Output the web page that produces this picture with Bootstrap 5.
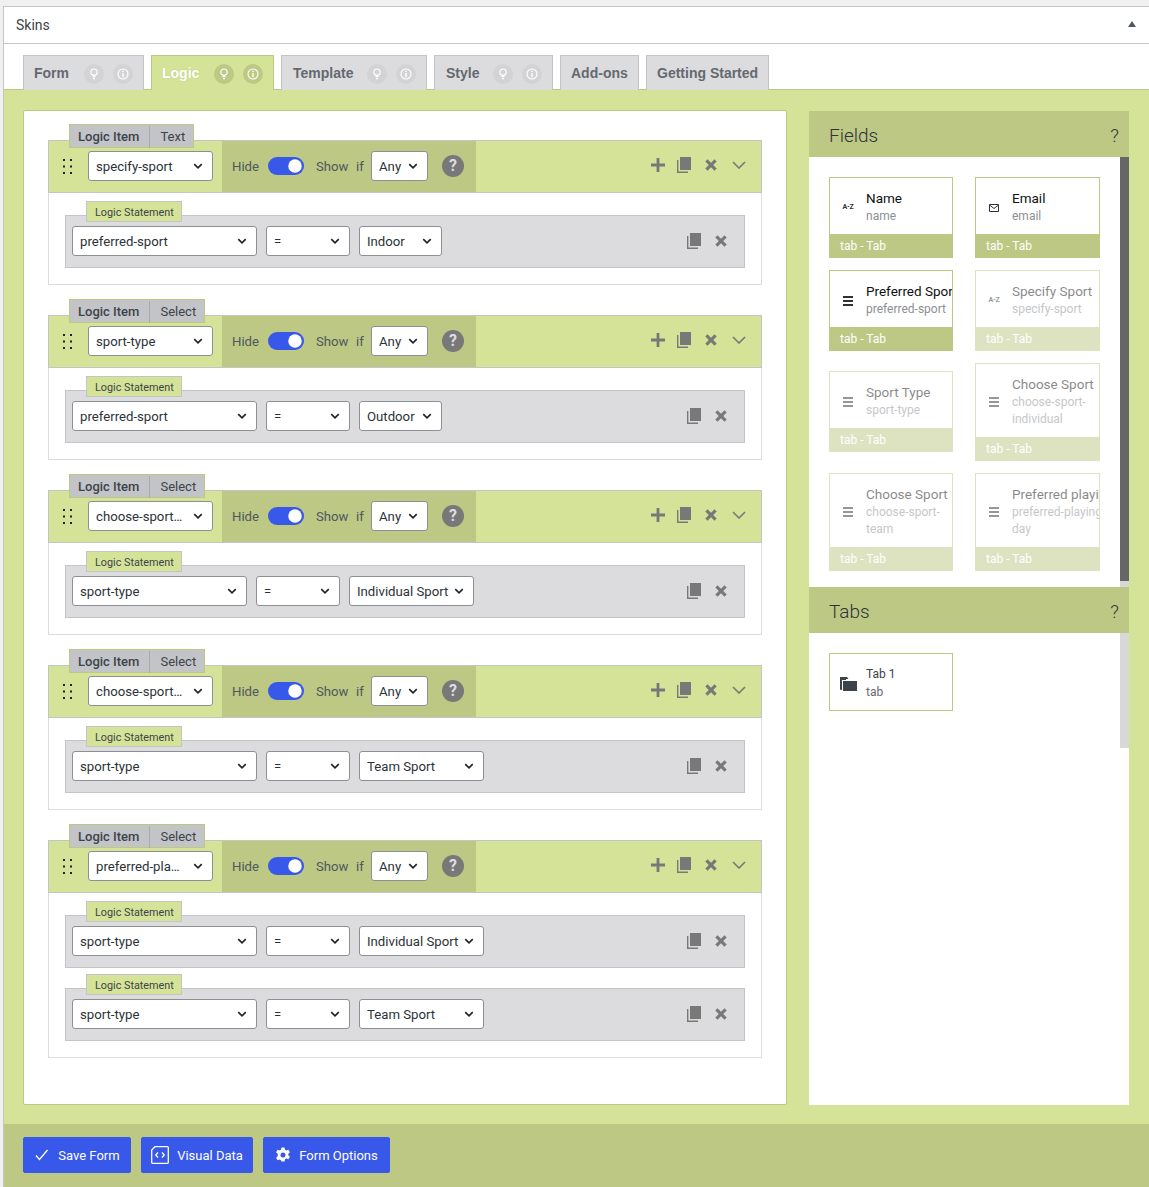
<!DOCTYPE html>
<html lang="en">
<head>
  <meta charset="UTF-8">
  <title>Skins</title>
  <link href="https://cdn.jsdelivr.net/npm/bootstrap@5.3.0/dist/css/bootstrap.min.css" rel="stylesheet">
  <style>
    body { background: #f0f0f1; font-family: Roboto, "Noto Sans", sans-serif; font-size: 13.2px; color: #3c434a; padding: 6px 0 0 3px; height: 1187px; overflow: hidden; }
    .panel-wrap { border-top: 1px solid #c3c4c7; border-left: 1px solid #c3c4c7; background: #fff; height: 1181px; display: flex; flex-direction: column; }
    .skins-head { height: 37px; border-bottom: 1px solid #c3c4c7; padding: 1px 12px 0; font-size: 14px; }
    .skins-arrow { width: 0; height: 0; border-left: 4px solid transparent; border-right: 4px solid transparent; border-bottom: 6px solid #50575e; margin-right: 1px; margin-top: -3px; }
    .tab-strip { height: 46px; padding: 11px 0 0 19px; gap: 7px; border-bottom: 1px solid #bdc885; }
    .tab-item { height: 36px; border: 1px solid #c3c4c7; border-bottom: 0; background: #dcdcde; padding: 0 10px; font-family: "Liberation Sans", sans-serif; font-weight: 700; font-size: 14px; color: #646970; white-space: nowrap; }
    .tab-item.tab-wide { padding-left: 11px; }
    .tab-item.is-on { background: #d5e398; border-color: #bdc885; color: #fff; text-shadow: 0 0 2px #bdc885; height: 36px; margin-bottom: -1px; }
    .tab-dot { width: 20px; height: 20px; border-radius: 50%; background: #d3d3d5; }
    .tab-dot svg { width: 12px; height: 12px; display: block; margin: 4px; }
    .is-on .tab-dot { background: #bdc885; }
    .tab-gap { margin-left: 15px; gap: 9px; }
    .work-area { height: 1034px; background: #d5e398; padding: 20px 19px 19px 19px; gap: 22px; }
    .logic-col { width: 764px; background: #fff; border: 1px solid #bdc885; border-radius: 2px; padding: 29px 24px 0; }
    .logic-box { position: relative; border: 1px solid #dcdcde; margin-bottom: 30px; padding-bottom: 16px; }
    .logic-top { margin: -1px -1px 0; height: 53px; border: 1px solid #c3c4c7; background: #d5e398; }
    .logic-tag { position: absolute; left: 20px; top: -17px; height: 24px; border: 1px solid #bdc885; background: #c3c4c7; font-size: 13px; line-height: 24px; padding: 0 8px; z-index: 1; }
    .logic-tag b { font-weight: 500; padding-right: 10px; margin-right: 10px; border-right: 1px solid #aaa; line-height: 22px; display: inline-block; }
    .drag-cell { width: 173px; padding: 0 0 1px 14px; gap: 16px; flex: none; height: 100%; }
    .drag-dots { width: 9px; height: 15px; flex: none; }
    .rule-cell { width: 254px; background: #bdc885; padding: 0 0 1px 10px; height: 100%; flex: none; color: #50575e; }
    .tool-cell { padding: 0 15px 3px 0; gap: 12px; }
    .tool-gap { margin-left: 2px; }
    .tool-gap-b { margin-left: 3px; }
    .tool-icon { color: #787878; display: block; }
    select.form-select { height: 30px; border: 1px solid #8c8f94; border-radius: 3px; font-size: 13.2px; line-height: 18px; color: #2c3338; padding: 2px 20px 0 7px; background-image: url("data:image/svg+xml,%3csvg xmlns='http://www.w3.org/2000/svg' viewBox='0 0 16 16'%3e%3cpath fill='none' stroke='%231d2327' stroke-width='2.6' d='M2 5l6 6 6-6'/%3e%3c/svg%3e"); background-position: right 9px center; background-size: 10px 10px; text-overflow: ellipsis; box-shadow: none; }
    select.w-top { width: 125px; padding-right: 28px; }
    .w-any { width: 57px; margin-left: 0; }
    .w-f1 { width: 185px; } .w-f2 { width: 175px; } .w-op { width: 84px; } .w-v1 { width: 83px; } .w-v2 { width: 125px; }
    .hide-lbl { width: 36px; flex: none; padding-top: 2px; }
    .show-lbl { margin-left: 12px; width: 40px; flex: none; padding-top: 2px; }
    .if-lbl { width: 15px; flex: none; padding-top: 2px; }
    .form-switch { padding: 0; margin: 0; min-height: 0; line-height: 0; }
    .form-switch .form-check-input { margin: 0; width: 36px; height: 18px; float: none; border: 0; background-color: #3858e9; }
    .help-dot { width: 22px; height: 22px; border-radius: 50%; background: #787878; color: #dcdcde; font-weight: 700; font-size: 16px; margin-left: 14px; }
    .stmt-box { position: relative; margin: 22px 16px 0; height: 53px; background: #dcdcde; border: 1px solid #c3c4c7; padding: 0 17px 1px 6px; gap: 9px; }
    .stmt-tag { position: absolute; left: 20px; top: -15px; width: 96px; height: 21px; background: #d5e398; border: 1px solid #c3c4c7; font-size: 10.8px; padding: 0 8px; line-height: 22px; color: #3c434a; white-space: nowrap; }
    .stmt-tools { gap: 14px; }
    .side-col { width: 320px; margin-top: 1px; position: relative; background: #fff; }
    .side-head { height: 46px; background: #bdc885; font-size: 19px; padding: 5px 10px 0 20px; position: relative; z-index: 2; color: #2c3338; font-weight: 300; }
    .field-list { height: 430px; padding: 20px 20px 0; display: grid; grid-template-columns: 124px 125px; column-gap: 22px; row-gap: 12px; align-items: center; align-content: start; }
    .tab-list { padding: 20px; }
    .field-card { border: 1px solid #bdc885; overflow: hidden; background: #fff; }
    .field-card.is-dim { opacity: .5; }
    .field-card.nudge-up { margin-bottom: 1px; }
    .field-main { display: flex; align-items: center; padding: 11px 0 9px; }
    .field-ico { width: 36px; flex: none; text-align: center; color: #2c3338; }
    .az-mark { font-size: 7px; font-weight: 700; letter-spacing: -.2px; }
    .field-name { font-size: 13.5px; line-height: 19px; color: #111; white-space: nowrap; }
    .field-name.is-small { color: #3c434a; font-size: 12px; }
    .field-slug { font-size: 12px; line-height: 17px; color: #8c8f94; white-space: nowrap; }
    .field-slug.is-small { color: #646970; }
    .field-foot { margin: 0 -1px -1px; height: 24px; line-height: 24px; background: #bdc885; color: #fff; font-size: 12px; padding-left: 11px; }
    .scroll-track { position: absolute; right: 0; top: 46px; width: 9px; height: 591px; background: #d8d8d8; }
    .scroll-thumb { height: 424px; background: #666; }
    .foot-bar { height: 63px; background: #bdc885; padding: 13px 19px; gap: 10px; }
    .btn-blue { height: 36px; background: #3858e9; border-color: #3858e9; color: #fff; font-size: 13px; border-radius: 2px; padding: 0; gap: 8px; display: flex; align-items: center; justify-content: center; }
    .btn-blue:hover { background: #3858e9; color: #fff; }
    .btn-label { margin-top: 2px; }
    .btn-save { width: 108px; } .btn-data { width: 112px; } .btn-opts { width: 127px; }
  </style>
</head>
<body>
  <svg width="0" height="0" class="position-absolute">
    <symbol id="i-plus" viewBox="0 0 14 14"><path d="M5.6 0h2.8v5.6H14v2.8H8.4V14H5.6V8.4H0V5.6h5.6z" fill="currentColor"/></symbol>
    <symbol id="i-copy" viewBox="0 0 14 16"><path d="M3 0h11v13H3z" fill="currentColor"/><path d="M.7 3v12.3H11" fill="none" stroke="currentColor" stroke-width="1.4"/></symbol>
    <symbol id="i-x" viewBox="0 0 12 12"><path d="M2.5.3 6 3.8 9.500.3l2.200 2.200L8.200 6l3.500 3.500-2.200 2.200L6 8.200l-3.500 3.500L.3 9.500 3.800 6 .3 2.500z" fill="currentColor"/></symbol>
    <symbol id="i-chev" viewBox="0 0 14 8"><path d="M1 1l6 6 6-6" fill="none" stroke="currentColor" stroke-width="1.6"/></symbol>
    <symbol id="i-list" viewBox="0 0 10 10"><path d="M0 0h10v2H0zM0 4h10v2H0zM0 8h10v2H0z" fill="currentColor"/></symbol>
    <symbol id="i-dots" viewBox="0 0 9 15"><path d="M0 0h2v2H0zM7 0h2v2H7zM0 6.500h2v2H0zM7 6.500h2v2H7zM0 13h2v2H0zM7 13h2v2H7z" fill="#1d2327"/></symbol>
    <symbol id="i-bulb" viewBox="0 0 12 12"><circle cx="6" cy="4.200" r="3.200" fill="none" stroke="#fff" stroke-width="1.200"/><path d="M4.500 8h3v1.200h-3zM5 10h2v1.300H5z" fill="#fff"/></symbol>
    <symbol id="i-info" viewBox="0 0 12 12"><circle cx="6" cy="6" r="5" fill="none" stroke="#fff" stroke-width="1.100"/><path d="M5.300 2.800h1.400v1.300H5.300zM5.300 5h1.400v4.200H5.300z" fill="#fff"/></symbol>
  </svg>

  <div class="panel-wrap">
    <div class="skins-head d-flex align-items-center justify-content-between">
      <span>Skins</span><span class="skins-arrow"></span>
    </div>
    <div class="tab-strip d-flex align-items-start">
      <div class="tab-item d-flex align-items-center" style="width:121px"><span>Form</span><span class="tab-gap d-flex ms-auto"><span class="tab-dot"><svg><use href="#i-bulb"/></svg></span><span class="tab-dot"><svg><use href="#i-info"/></svg></span></span></div>
      <div class="tab-item is-on d-flex align-items-center" style="width:123px"><span>Logic</span><span class="tab-gap d-flex ms-auto"><span class="tab-dot"><svg><use href="#i-bulb"/></svg></span><span class="tab-dot"><svg><use href="#i-info"/></svg></span></span></div>
      <div class="tab-item tab-wide d-flex align-items-center" style="width:146px"><span>Template</span><span class="tab-gap d-flex ms-auto"><span class="tab-dot"><svg><use href="#i-bulb"/></svg></span><span class="tab-dot"><svg><use href="#i-info"/></svg></span></span></div>
      <div class="tab-item tab-wide d-flex align-items-center" style="width:119px"><span>Style</span><span class="tab-gap d-flex ms-auto"><span class="tab-dot"><svg><use href="#i-bulb"/></svg></span><span class="tab-dot"><svg><use href="#i-info"/></svg></span></span></div>
      <div class="tab-item d-flex align-items-center" style="width:79px"><span>Add-ons</span></div>
      <div class="tab-item d-flex align-items-center" style="width:123px"><span>Getting Started</span></div>
    </div>

    <div class="work-area d-flex">
      <div class="logic-col">

        <div class="logic-box">
          <div class="logic-tag"><b>Logic Item</b>Text</div>
          <div class="logic-top d-flex align-items-center">
            <div class="drag-cell d-flex align-items-center"><svg class="drag-dots"><use href="#i-dots"/></svg><select class="form-select w-top"><option>specify-sport</option></select></div>
            <div class="rule-cell d-flex align-items-center"><span class="hide-lbl">Hide</span><div class="form-check form-switch"><input class="form-check-input" type="checkbox" checked></div><span class="show-lbl">Show</span><span class="if-lbl">if</span><select class="form-select w-any"><option>Any</option></select><span class="help-dot d-flex align-items-center justify-content-center">?</span></div>
            <div class="tool-cell d-flex align-items-center ms-auto"><svg class="tool-icon" width="14" height="14"><use href="#i-plus"/></svg><svg class="tool-icon" width="14" height="16"><use href="#i-copy"/></svg><svg class="tool-icon tool-gap" width="12" height="12"><use href="#i-x"/></svg><svg class="tool-icon tool-gap-b" width="14" height="8"><use href="#i-chev"/></svg></div>
          </div>
          <div class="stmt-box d-flex align-items-center">
            <div class="stmt-tag">Logic Statement</div>
            <select class="form-select w-f1"><option>preferred-sport</option></select><select class="form-select w-op"><option>=</option></select><select class="form-select w-v1"><option>Indoor</option></select>
            <div class="stmt-tools d-flex align-items-center ms-auto"><svg class="tool-icon" width="14" height="16"><use href="#i-copy"/></svg><svg class="tool-icon" width="12" height="12"><use href="#i-x"/></svg></div>
          </div>
        </div>

        <div class="logic-box">
          <div class="logic-tag"><b>Logic Item</b>Select</div>
          <div class="logic-top d-flex align-items-center">
            <div class="drag-cell d-flex align-items-center"><svg class="drag-dots"><use href="#i-dots"/></svg><select class="form-select w-top"><option>sport-type</option></select></div>
            <div class="rule-cell d-flex align-items-center"><span class="hide-lbl">Hide</span><div class="form-check form-switch"><input class="form-check-input" type="checkbox" checked></div><span class="show-lbl">Show</span><span class="if-lbl">if</span><select class="form-select w-any"><option>Any</option></select><span class="help-dot d-flex align-items-center justify-content-center">?</span></div>
            <div class="tool-cell d-flex align-items-center ms-auto"><svg class="tool-icon" width="14" height="14"><use href="#i-plus"/></svg><svg class="tool-icon" width="14" height="16"><use href="#i-copy"/></svg><svg class="tool-icon tool-gap" width="12" height="12"><use href="#i-x"/></svg><svg class="tool-icon tool-gap-b" width="14" height="8"><use href="#i-chev"/></svg></div>
          </div>
          <div class="stmt-box d-flex align-items-center">
            <div class="stmt-tag">Logic Statement</div>
            <select class="form-select w-f1"><option>preferred-sport</option></select><select class="form-select w-op"><option>=</option></select><select class="form-select w-v1"><option>Outdoor</option></select>
            <div class="stmt-tools d-flex align-items-center ms-auto"><svg class="tool-icon" width="14" height="16"><use href="#i-copy"/></svg><svg class="tool-icon" width="12" height="12"><use href="#i-x"/></svg></div>
          </div>
        </div>

        <div class="logic-box">
          <div class="logic-tag"><b>Logic Item</b>Select</div>
          <div class="logic-top d-flex align-items-center">
            <div class="drag-cell d-flex align-items-center"><svg class="drag-dots"><use href="#i-dots"/></svg><select class="form-select w-top"><option>choose-sport-individual</option></select></div>
            <div class="rule-cell d-flex align-items-center"><span class="hide-lbl">Hide</span><div class="form-check form-switch"><input class="form-check-input" type="checkbox" checked></div><span class="show-lbl">Show</span><span class="if-lbl">if</span><select class="form-select w-any"><option>Any</option></select><span class="help-dot d-flex align-items-center justify-content-center">?</span></div>
            <div class="tool-cell d-flex align-items-center ms-auto"><svg class="tool-icon" width="14" height="14"><use href="#i-plus"/></svg><svg class="tool-icon" width="14" height="16"><use href="#i-copy"/></svg><svg class="tool-icon tool-gap" width="12" height="12"><use href="#i-x"/></svg><svg class="tool-icon tool-gap-b" width="14" height="8"><use href="#i-chev"/></svg></div>
          </div>
          <div class="stmt-box d-flex align-items-center">
            <div class="stmt-tag">Logic Statement</div>
            <select class="form-select w-f2"><option>sport-type</option></select><select class="form-select w-op"><option>=</option></select><select class="form-select w-v2"><option>Individual Sport</option></select>
            <div class="stmt-tools d-flex align-items-center ms-auto"><svg class="tool-icon" width="14" height="16"><use href="#i-copy"/></svg><svg class="tool-icon" width="12" height="12"><use href="#i-x"/></svg></div>
          </div>
        </div>

        <div class="logic-box">
          <div class="logic-tag"><b>Logic Item</b>Select</div>
          <div class="logic-top d-flex align-items-center">
            <div class="drag-cell d-flex align-items-center"><svg class="drag-dots"><use href="#i-dots"/></svg><select class="form-select w-top"><option>choose-sport-team-name</option></select></div>
            <div class="rule-cell d-flex align-items-center"><span class="hide-lbl">Hide</span><div class="form-check form-switch"><input class="form-check-input" type="checkbox" checked></div><span class="show-lbl">Show</span><span class="if-lbl">if</span><select class="form-select w-any"><option>Any</option></select><span class="help-dot d-flex align-items-center justify-content-center">?</span></div>
            <div class="tool-cell d-flex align-items-center ms-auto"><svg class="tool-icon" width="14" height="14"><use href="#i-plus"/></svg><svg class="tool-icon" width="14" height="16"><use href="#i-copy"/></svg><svg class="tool-icon tool-gap" width="12" height="12"><use href="#i-x"/></svg><svg class="tool-icon tool-gap-b" width="14" height="8"><use href="#i-chev"/></svg></div>
          </div>
          <div class="stmt-box d-flex align-items-center">
            <div class="stmt-tag">Logic Statement</div>
            <select class="form-select w-f1"><option>sport-type</option></select><select class="form-select w-op"><option>=</option></select><select class="form-select w-v2"><option>Team Sport</option></select>
            <div class="stmt-tools d-flex align-items-center ms-auto"><svg class="tool-icon" width="14" height="16"><use href="#i-copy"/></svg><svg class="tool-icon" width="12" height="12"><use href="#i-x"/></svg></div>
          </div>
        </div>

        <div class="logic-box">
          <div class="logic-tag"><b>Logic Item</b>Select</div>
          <div class="logic-top d-flex align-items-center">
            <div class="drag-cell d-flex align-items-center"><svg class="drag-dots"><use href="#i-dots"/></svg><select class="form-select w-top"><option>preferred-playing-day</option></select></div>
            <div class="rule-cell d-flex align-items-center"><span class="hide-lbl">Hide</span><div class="form-check form-switch"><input class="form-check-input" type="checkbox" checked></div><span class="show-lbl">Show</span><span class="if-lbl">if</span><select class="form-select w-any"><option>Any</option></select><span class="help-dot d-flex align-items-center justify-content-center">?</span></div>
            <div class="tool-cell d-flex align-items-center ms-auto"><svg class="tool-icon" width="14" height="14"><use href="#i-plus"/></svg><svg class="tool-icon" width="14" height="16"><use href="#i-copy"/></svg><svg class="tool-icon tool-gap" width="12" height="12"><use href="#i-x"/></svg><svg class="tool-icon tool-gap-b" width="14" height="8"><use href="#i-chev"/></svg></div>
          </div>
          <div class="stmt-box d-flex align-items-center">
            <div class="stmt-tag">Logic Statement</div>
            <select class="form-select w-f1"><option>sport-type</option></select><select class="form-select w-op"><option>=</option></select><select class="form-select w-v2"><option>Individual Sport</option></select>
            <div class="stmt-tools d-flex align-items-center ms-auto"><svg class="tool-icon" width="14" height="16"><use href="#i-copy"/></svg><svg class="tool-icon" width="12" height="12"><use href="#i-x"/></svg></div>
          </div>
          <div class="stmt-box d-flex align-items-center" style="margin-top:20px">
            <div class="stmt-tag">Logic Statement</div>
            <select class="form-select w-f1"><option>sport-type</option></select><select class="form-select w-op"><option>=</option></select><select class="form-select w-v2"><option>Team Sport</option></select>
            <div class="stmt-tools d-flex align-items-center ms-auto"><svg class="tool-icon" width="14" height="16"><use href="#i-copy"/></svg><svg class="tool-icon" width="12" height="12"><use href="#i-x"/></svg></div>
          </div>
        </div>

      </div>

      <div class="side-col">
        <div class="scroll-track"><div class="scroll-thumb"></div></div>
        <div class="side-head d-flex align-items-center justify-content-between"><span>Fields</span><span>?</span></div>
        <div class="field-list">
          <div class="field-card"><div class="field-main"><span class="field-ico az-mark">A-Z</span><div><div class="field-name">Name</div><div class="field-slug">name</div></div></div><div class="field-foot">tab - Tab</div></div>
          <div class="field-card"><div class="field-main"><span class="field-ico"><svg width="10" height="8" viewBox="0 0 10 8"><path d="M.5.5h9v7h-9zM.5 1l4.500 3.500L9.500 1" fill="none" stroke="currentColor"/></svg></span><div><div class="field-name">Email</div><div class="field-slug">email</div></div></div><div class="field-foot">tab - Tab</div></div>
          <div class="field-card"><div class="field-main"><span class="field-ico"><svg width="10" height="10"><use href="#i-list"/></svg></span><div><div class="field-name">Preferred Sport</div><div class="field-slug">preferred-sport</div></div></div><div class="field-foot">tab - Tab</div></div>
          <div class="field-card is-dim"><div class="field-main"><span class="field-ico az-mark">A-Z</span><div><div class="field-name">Specify Sport</div><div class="field-slug">specify-sport</div></div></div><div class="field-foot">tab - Tab</div></div>
          <div class="field-card is-dim nudge-up"><div class="field-main"><span class="field-ico"><svg width="10" height="10"><use href="#i-list"/></svg></span><div><div class="field-name">Sport Type</div><div class="field-slug">sport-type</div></div></div><div class="field-foot">tab - Tab</div></div>
          <div class="field-card is-dim"><div class="field-main"><span class="field-ico"><svg width="10" height="10"><use href="#i-list"/></svg></span><div><div class="field-name">Choose Sport</div><div class="field-slug">choose-sport-<br>individual</div></div></div><div class="field-foot">tab - Tab</div></div>
          <div class="field-card is-dim"><div class="field-main"><span class="field-ico"><svg width="10" height="10"><use href="#i-list"/></svg></span><div><div class="field-name">Choose Sport</div><div class="field-slug">choose-sport-<br>team</div></div></div><div class="field-foot">tab - Tab</div></div>
          <div class="field-card is-dim"><div class="field-main"><span class="field-ico"><svg width="10" height="10"><use href="#i-list"/></svg></span><div><div class="field-name">Preferred playing day</div><div class="field-slug">preferred-playing-<br>day</div></div></div><div class="field-foot">tab - Tab</div></div>
        </div>
        <div class="side-head d-flex align-items-center justify-content-between"><span>Tabs</span><span>?</span></div>
        <div class="tab-list">
          <div class="field-card" style="width:124px"><div class="field-main"><span class="field-ico"><svg width="17" height="15" viewBox="0 0 17 15"><path d="M0 1h7l1.500 2H6v1H2v10H1a1 1 0 0 1-1-1z" fill="#3c434a"/><path d="M3 5h14v10H3z" fill="#3c434a"/></svg></span><div><div class="field-name is-small">Tab 1</div><div class="field-slug is-small">tab</div></div></div></div>
        </div>
      </div>
    </div>

    <div class="foot-bar d-flex">
      <button type="button" class="btn btn-blue btn-save"><svg width="16" height="12" viewBox="0 0 16 12"><path d="M2 6.500l3.500 4L13.500 1" fill="none" stroke="#fff" stroke-width="1.300"/></svg><span class="btn-label">Save Form</span></button>
      <button type="button" class="btn btn-blue btn-data"><svg width="18" height="18" viewBox="0 0 18 18"><path d="M4 .7h12.500a.8.8 0 0 1 .8.800v15a.8.8 0 0 1-.8.800h-15a.8.8 0 0 1-.8-.8V4z" fill="none" stroke="#fff" stroke-width="1.300"/><path d="M7 6.500 4.700 9 7 11.500M11 6.500 13.300 9 11 11.500" fill="none" stroke="#fff" stroke-width="1.300"/></svg><span class="btn-label">Visual Data</span></button>
      <button type="button" class="btn btn-blue btn-opts"><svg width="16" height="16" viewBox="0 0 16 16"><path fill-rule="evenodd" d="M6.500.5h3l.5 2.200 1.300.7 2.100-.7 1.500 2.600-1.600 1.500v1.400l1.600 1.500-1.500 2.600-2.100-.7-1.300.7-.5 2.200h-3L6 13.300l-1.300-.7-2.100.7-1.500-2.600 1.600-1.500V8.800 6.800L1.100 5.300l1.500-2.600 2.100.7L6 2.700zM8 5.500a2.500 2.500 0 1 0 0 5 2.500 2.500 0 0 0 0-5z" fill="#fff"/></svg><span class="btn-label">Form Options</span></button>
    </div>
  </div>
</body>
</html>
